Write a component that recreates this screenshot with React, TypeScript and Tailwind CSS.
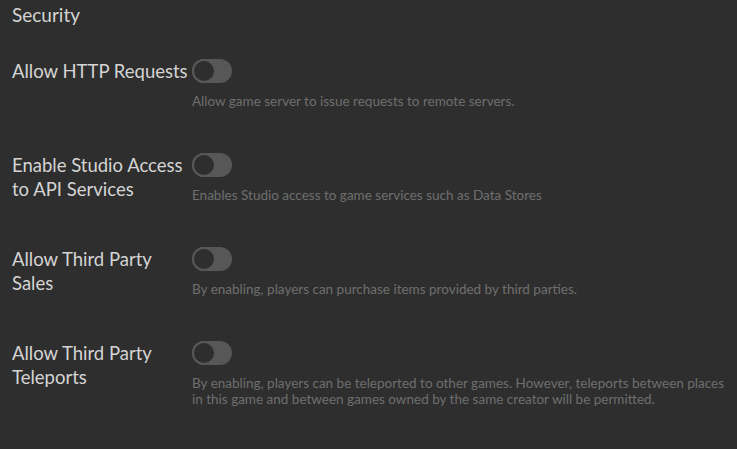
const settings = [
  {
    label: "Allow HTTP Requests",
    description: "Allow game server to issue requests to remote servers.",
  },
  {
    label: "Enable Studio Access to API Services",
    description: "Enables Studio access to game services such as Data Stores",
  },
  {
    label: "Allow Third Party Sales",
    description: "By enabling, players can purchase items provided by third parties.",
  },
  {
    label: "Allow Third Party Teleports",
    description:
      "By enabling, players can be teleported to other games. However, teleports between places in this game and between games owned by the same creator will be permitted.",
  },
];

function Toggle() {
  return (
    <div className="relative h-6 w-10 shrink-0 rounded-full bg-[#575757]">
      <div className="absolute left-0 top-0 h-6 w-6 rounded-full border-2 border-[#575757] bg-[#2e2e2e]" />
    </div>
  );
}

export default function App() {
  return (
    <main
      className="min-h-screen bg-[#2e2e2e] px-3 pt-[3px] text-[#d4d4d4]"
      style={{ fontFamily: '"Lato", "Noto Sans", sans-serif' }}
    >
      <h1 className="h-6 text-[19px] leading-6">Security</h1>
      <div className="mt-8 flex flex-col gap-11">
        {settings.map((item, index) => (
          <div key={index} className="flex">
            <div className="w-[180px] shrink-0 pr-1 text-[18.5px] leading-6">{item.label}</div>
            <div className="flex flex-col">
              <Toggle />
              <p className="mt-[10px] text-[13.5px] leading-4 text-[#6e6e6e]">{item.description}</p>
            </div>
          </div>
        ))}
      </div>
    </main>
  );
}
